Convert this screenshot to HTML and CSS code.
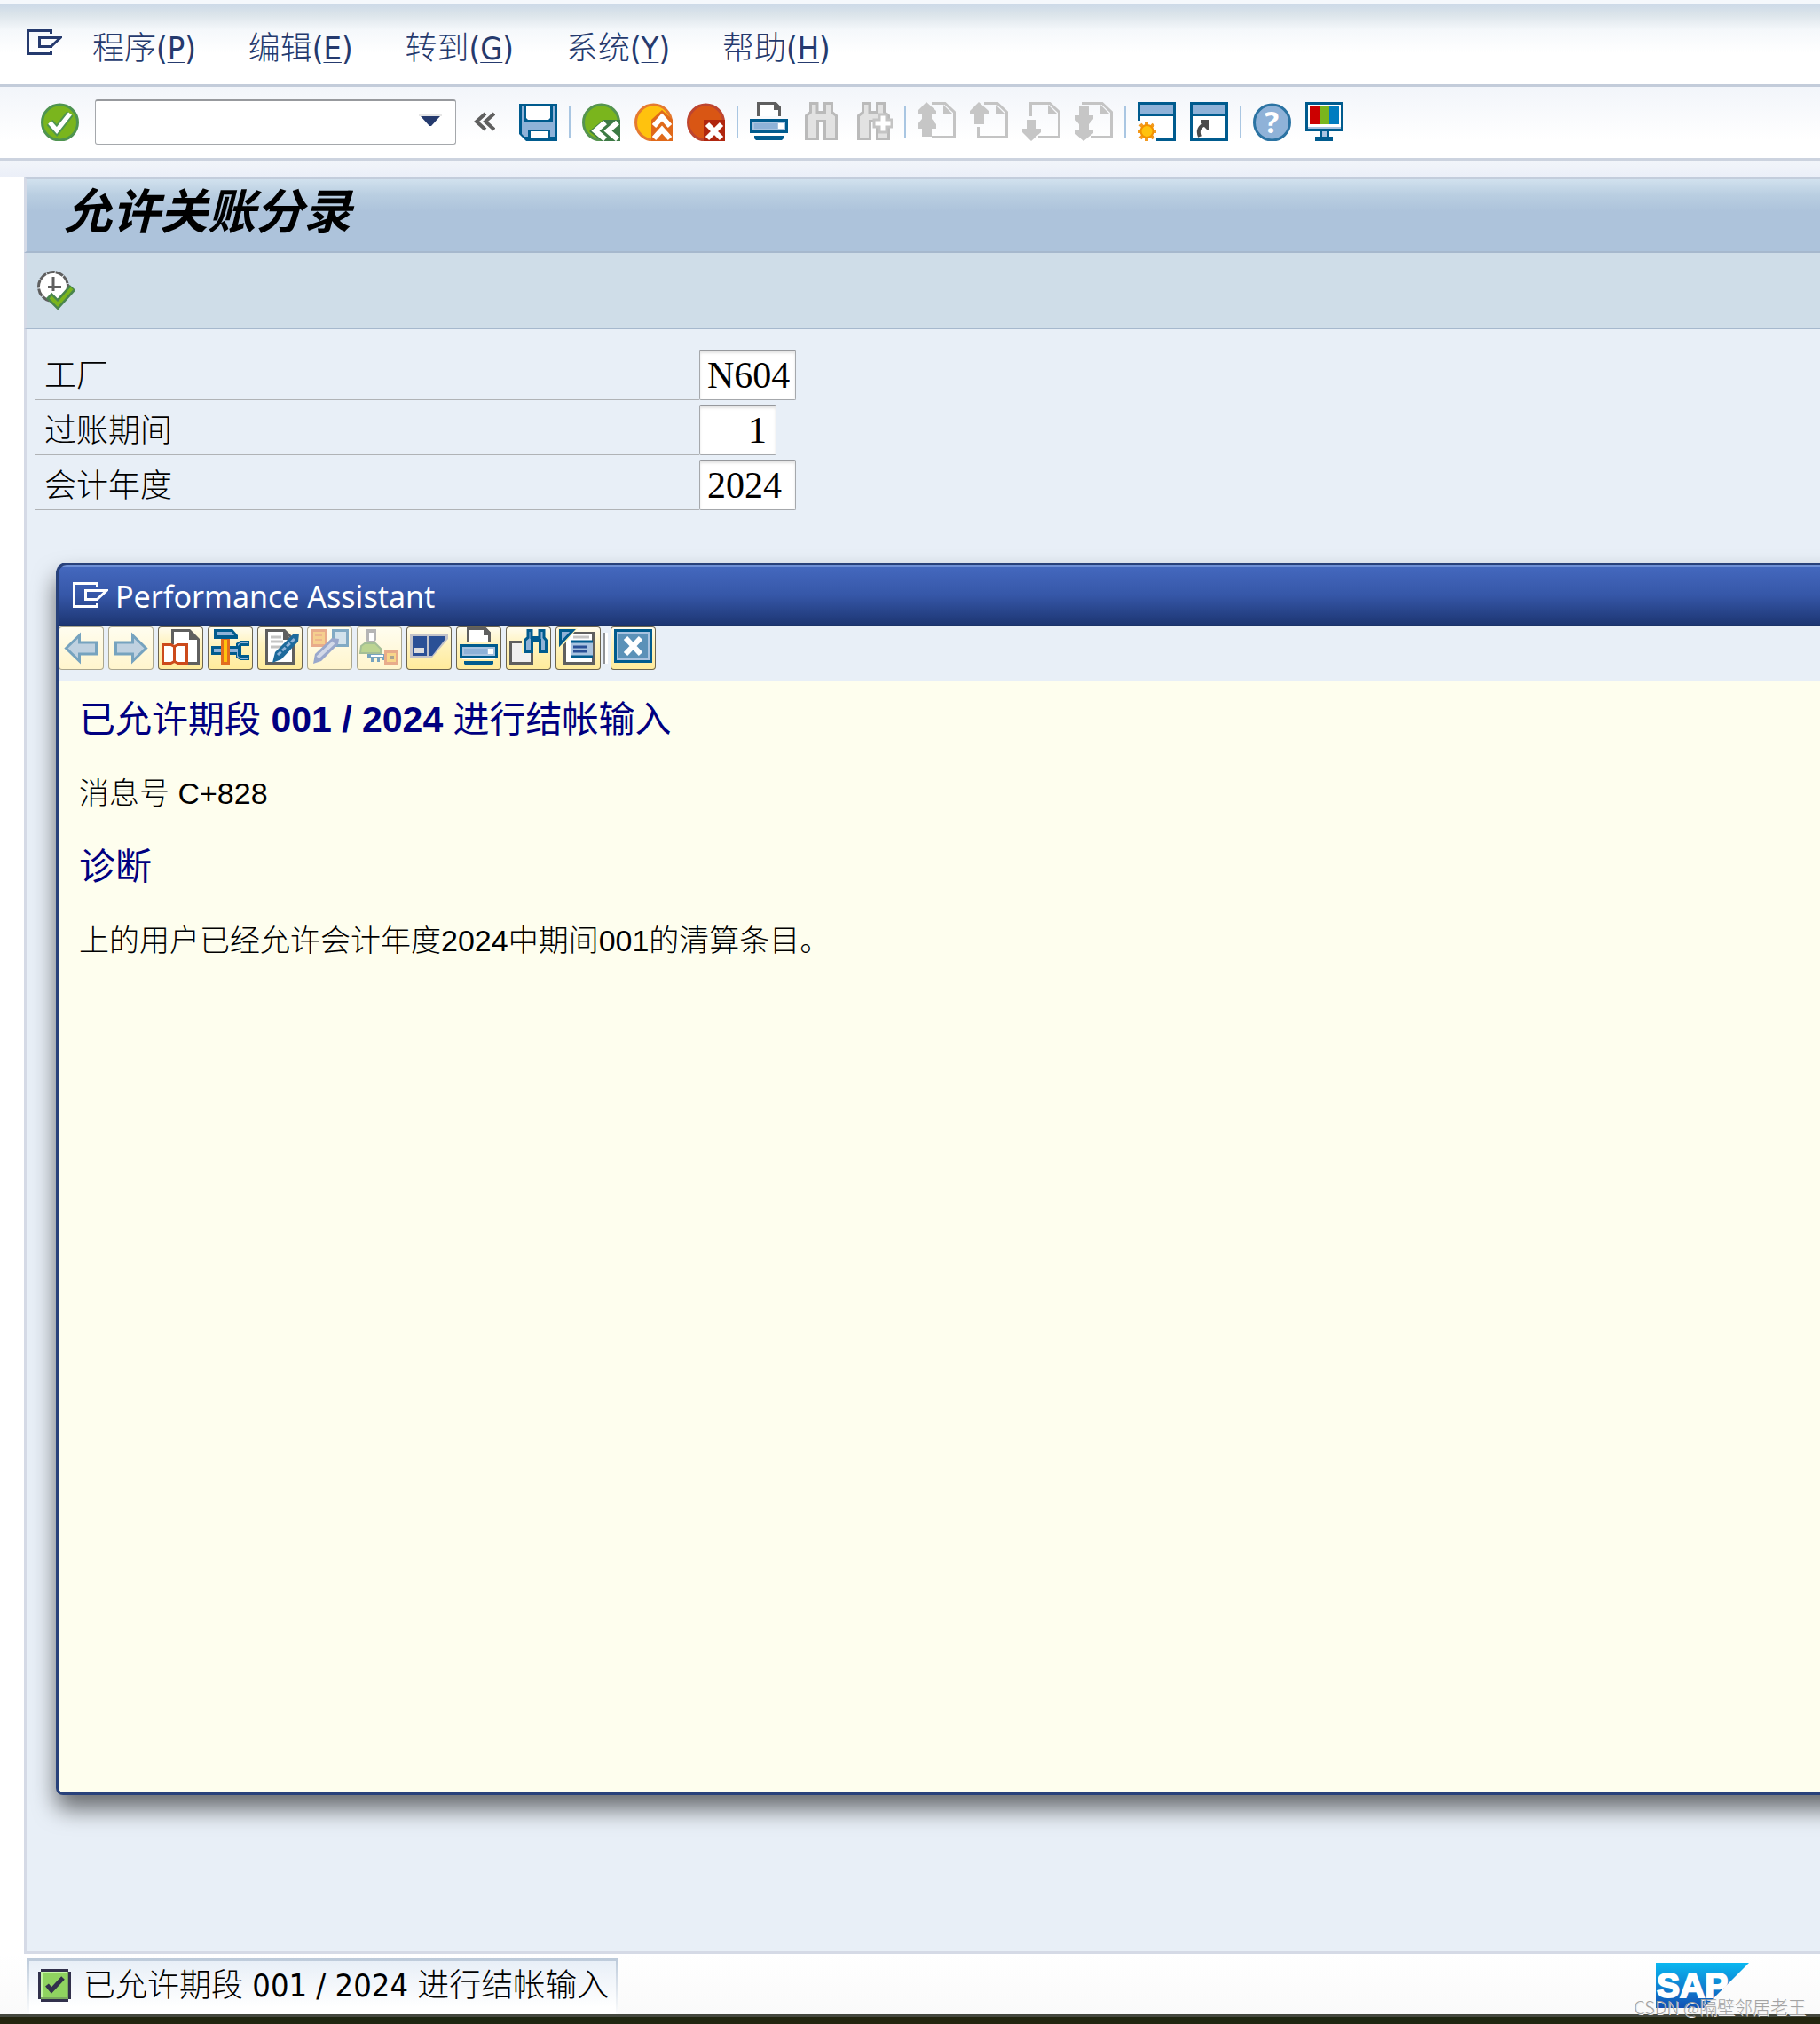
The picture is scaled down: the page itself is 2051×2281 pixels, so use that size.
FILE: index.html
```
<!DOCTYPE html>
<html lang="zh-CN">
<head>
    <meta charset="UTF-8">
    <title>允许关账分录</title>
    <link rel="stylesheet" href="styles.css">
</head>
<body>
    <!-- shared symbols -->
    <svg class="defs" width="0" height="0" aria-hidden="true">
        <symbol id="i-window" viewBox="0 0 40 29">
            <path d="M27.500 5V1.500H1.500v26h26V24M29 19.500H14.500v-10H38L28 19" fill="none" stroke="currentColor" stroke-width="3"/>
        </symbol>
        <symbol id="i-printer" viewBox="0 0 43 44">
            <path d="M9.500 16V1.500H29L33.500 6V16" fill="#fff" stroke="#5f5f5f" stroke-width="3"/>
            <path d="M27 1h3l5 5v3h-8z" fill="#5f5f5f"/>
            <path d="M0 19h43v16H0z" fill="#005b8e"/>
            <path d="M3 22h37v10H3z" fill="#a9c3e0"/>
            <path d="M5 24h26v6H5z" fill="#8fb2d8"/>
            <path d="M32 24h6v6h-6zM3 35h37v1H3z" fill="#fff"/>
            <path d="M5 38h33v3l-2 2H7l-2-2z" fill="#005b8e"/>
        </symbol>
        <symbol id="i-page" viewBox="0 0 43 44">
            <path d="M29 3l10 10H29z" fill="#c4c4c4"/>
        </symbol>
    </svg>

    <nav class="menubar">
        <svg class="window-icon"><use href="#i-window"/></svg>
        <a href="#">程序(<u>P</u>)</a>
        <a href="#">编辑(<u>E</u>)</a>
        <a href="#">转到(<u>G</u>)</a>
        <a href="#">系统(<u>Y</u>)</a>
        <a href="#">帮助(<u>H</u>)</a>
    </nav>

    <div class="toolbar">
        <button type="button" aria-label="回车">
            <svg viewBox="0 0 43 44"><circle cx="21.500" cy="23" r="20" fill="#7ab51d" stroke="#4f9450" stroke-width="3"/><path d="M10 23l8 9L33 13" fill="none" stroke="#4f9450" stroke-width="9"/><path d="M10 23l8 9L33 13" fill="none" stroke="#fff" stroke-width="5"/></svg>
        </button>
        <div class="command">
            <input type="text" aria-label="命令">
            <svg viewBox="0 0 26 16"><path d="M0 0h26v3H0z" fill="#e6e6e6"/><path d="M2 3h22L14 14h-2z" fill="#253a6e"/></svg>
        </div>
        <button type="button" class="collapse" aria-label="收起">
            <svg viewBox="0 0 24 20"><path d="M13 1L3 10l10 9M23 1L13 10l10 9" fill="none" stroke="#5f5f5f" stroke-width="4"/></svg>
        </button>
        <button type="button" aria-label="保存">
            <svg viewBox="0 0 43 44"><path d="M0 2h43v42H8l-8-8z" fill="#005b8e"/><path d="M3 4h2v18h33V4h2v35h-5v-8H10v8H6l-3-3z" fill="#8fb2d8"/><path d="M8 4h27v14l-2 2H10l-2-2zM13 33h19v8H13z" fill="#fff"/></svg>
        </button>
        <span class="sep"></span>
        <div class="group">
            <button type="button" aria-label="返回">
                <svg viewBox="0 0 43 44"><circle cx="21.500" cy="23" r="20" fill="#7ab51d" stroke="#559450" stroke-width="3"/><path d="M24 20h19v24H22L8 33z" fill="#3d7a45"/><path d="M26 23L15 32.500 26 42M40 23L29 32.500 40 42" fill="none" stroke="#fff" stroke-width="6"/></svg>
            </button>
            <button type="button" aria-label="退出">
                <svg viewBox="0 0 43 44"><circle cx="21.500" cy="23" r="20" fill="#ffc20e" stroke="#e57a30" stroke-width="3"/><path d="M31 9l12 11v24H19V20z" fill="#e0691a"/><path d="M22 27l9-10 9 10M22 41l9-10 9 10" fill="none" stroke="#fff" stroke-width="6"/></svg>
            </button>
            <button type="button" aria-label="取消">
                <svg viewBox="0 0 43 44"><circle cx="21.500" cy="23" r="20" fill="#d95614" stroke="#bd4530" stroke-width="3"/><path d="M19 20h24v24H19z" fill="#b0260f"/><path d="M23 25l16 16M39 25L23 41" stroke="#fff" stroke-width="6"/></svg>
            </button>
        </div>
        <span class="sep"></span>
        <div class="group">
            <button type="button" aria-label="打印">
                <svg><use href="#i-printer"/></svg>
            </button>
            <button type="button" aria-label="查找" disabled>
                <svg viewBox="0 0 43 44"><path d="M9.500 1.500H17v10h8.500v-10h8v10l5 4v26h-13v-20h-8v20h-13v-26l5-4z" fill="#e2e2e2" stroke="#bababa" stroke-width="3"/></svg>
            </button>
            <button type="button" aria-label="查找下一个" disabled>
                <svg viewBox="0 0 43 44"><path d="M9.500 1.500H17v10h8.500v-10h8v10l5 4v26h-13v-20h-8v20h-13v-26l5-4z" fill="#e2e2e2" stroke="#bababa" stroke-width="3"/><path d="M28 14h8v6h6v8h-6v6h-8v-6h-6v-8h6z" fill="#fff" stroke="#c4c4c4" stroke-width="3"/></svg>
            </button>
        </div>
        <span class="sep"></span>
        <div class="group">
            <button type="button" aria-label="第一页" disabled>
                <svg viewBox="0 0 43 44"><path d="M16 1.500h15l10.500 10v28H16" fill="none" stroke="#c4c4c4" stroke-width="3"/><use href="#i-page"/><path d="M10 0l11 10v4h-5v5l5 6v5h-5v9H5v-9H0v-5l5-6v-5H0v-4z" fill="#c6c6c6"/></svg>
            </button>
            <button type="button" aria-label="上一页" disabled>
                <svg viewBox="0 0 43 44"><path d="M16 1.500h15l10.500 10v28h-32V28" fill="none" stroke="#c4c4c4" stroke-width="3"/><use href="#i-page"/><path d="M10 0l11 10v4h-5v11H5V14H0v-4z" fill="#c6c6c6"/></svg>
            </button>
            <button type="button" aria-label="下一页" disabled>
                <svg viewBox="0 0 43 44"><path d="M9.500 16V1.500H31l10.500 10v28H18" fill="none" stroke="#c4c4c4" stroke-width="3"/><use href="#i-page"/><path d="M10 44L0 34v-4h5V20h11v10h5v4z" fill="#c6c6c6"/></svg>
            </button>
            <button type="button" aria-label="最后一页" disabled>
                <svg viewBox="0 0 43 44"><path d="M8 1.500h23l10.500 10v28H18" fill="none" stroke="#c4c4c4" stroke-width="3"/><use href="#i-page"/><path d="M10 44L0 35v-4h5v-6l-5-6v-4h5V4h11v11h5v4l-5 6v6h5v4z" fill="#c6c6c6"/></svg>
            </button>
        </div>
        <span class="sep"></span>
        <div class="group">
            <button type="button" aria-label="新建会话">
                <svg viewBox="0 0 43 44"><path d="M0 0h43v44H21v-3h19V16H3v5H0z" fill="#005b8e"/><path d="M3 3h37v10H3z" fill="#8fb2d8"/><path d="M3 16h37v25H21L3 21z" fill="#fff"/><path d="M10 22v22M-1 33h22M3 25l15 16M18 25L3 41" stroke="#f39a1f" stroke-width="4"/><circle cx="10.500" cy="33" r="7" fill="#ffc20e" stroke="#f39200" stroke-width="2"/></svg>
            </button>
            <button type="button" aria-label="创建快捷方式">
                <svg viewBox="0 0 43 44"><path d="M0 0h43v44H0z" fill="#005b8e"/><path d="M3 3h37v10H3z" fill="#8fb2d8"/><path d="M3 16h37v25H3z" fill="#fff"/><path d="M11 39c-3-7 0-12 6-14" fill="none" stroke="#4a4a4a" stroke-width="4"/><path d="M12 20h10v11h-3l-7-7z" fill="#4a4a4a"/></svg>
            </button>
        </div>
        <span class="sep"></span>
        <div class="group">
            <button type="button" aria-label="帮助">
                <svg viewBox="0 0 43 44"><circle cx="21.500" cy="23" r="20" fill="#8fb2d8" stroke="#2b73a3" stroke-width="3"/><text x="21" y="35" class="question">?</text></svg>
            </button>
            <button type="button" aria-label="定制本地布局">
                <svg viewBox="0 0 43 44"><path d="M0 0h43v33H27v6h4v5H11v-5h5v-6H0z" fill="#005b8e"/><path d="M3 3h37v25H3z" fill="#fff"/><path d="M3 28h37v2H3zM19 33h5v6h-5z" fill="#a9c3e0"/><path d="M5 5h11v20H5z" fill="#c00"/><path d="M16 5h11v20H16z" fill="#7ab51d"/><path d="M27 5h11v20H27z" fill="#007cc0"/></svg>
            </button>
        </div>
    </div>

    <main class="screen">
        <header class="screen-title"><h1>允许关账分录</h1></header>
        <div class="app-toolbar">
            <button type="button" aria-label="执行">
                <svg viewBox="0 0 43 44"><circle cx="18" cy="18" r="16.500" fill="#fff" stroke="#5f5f5f" stroke-width="3" stroke-dasharray="9 1"/><path d="M18 7v16M12 18.500h15" stroke="#5f5f5f" stroke-width="3"/><path d="M13 28l10 10L40 19" fill="none" stroke="#4a854e" stroke-width="9"/><path d="M15 30l8 8L39 20" fill="none" stroke="#7ab51d" stroke-width="4"/></svg>
            </button>
        </div>

        <form class="selection">
            <div class="field">
                <label for="plant">工厂</label>
                <input type="text" id="plant" value="N604">
            </div>
            <div class="field">
                <label for="period">过账期间</label>
                <input type="text" id="period" class="short" value="1">
            </div>
            <div class="field">
                <label for="year">会计年度</label>
                <input type="text" id="year" value="2024">
            </div>
        </form>

        <section class="assistant">
            <div class="assistant-title">
                <svg class="window-icon"><use href="#i-window"/></svg>
                <h2>Performance Assistant</h2>
            </div>
            <div class="assistant-toolbar">
                <button type="button" aria-label="后退" disabled>
                    <svg viewBox="0 0 51 49"><path d="M8.500 24.500L23.500 10v8h19v13h-19v8z" fill="#bfd1e0" stroke="#76a3bf" stroke-width="3"/></svg>
                </button>
                <button type="button" aria-label="前进" disabled>
                    <svg viewBox="0 0 51 49"><path d="M42.500 24.500L27.500 10v8h-19v13h19v8z" fill="#bfd1e0" stroke="#76a3bf" stroke-width="3"/></svg>
                </button>
                <button type="button" aria-label="应用帮助">
                    <svg viewBox="0 0 51 49"><path d="M16.500 20V4.500h19l10 10v27h-13" fill="#fff" stroke="#5f5f5f" stroke-width="3"/><path d="M35 3l12 12H35z" fill="#5f5f5f"/><path d="M5.500 20.500h9l4 2 4-2h10v21h-10l-4-2-4 2h-9zM18.500 22v19" fill="#fff" stroke="#cc4a1b" stroke-width="3"/></svg>
                </button>
                <button type="button" aria-label="技术信息">
                    <svg viewBox="0 0 51 49"><path d="M4 22h28v-3l5-3h10v6h-9v10h9v6H37l-5-3v-3H4z" fill="#005b8e"/><path d="M7 25h27v-5l3-2h8v1h-8l-3 3v11l3 3h8v1h-8l-4-3v-5H7z" fill="#8fb2d8"/><path d="M16.500 13.500h7v28h-7z" fill="#ffc20e" stroke="#e36c1e" stroke-width="3"/><path d="M7 3h21l6 7v4H7z" fill="#005b8e"/><path d="M10 6h17l3 4H10z" fill="#8fb2d8"/></svg>
                </button>
                <button type="button" aria-label="编辑文档">
                    <svg viewBox="0 0 51 49"><path d="M10.500 4.500h20l10 10v27h-30z" fill="#fff" stroke="#5f5f5f" stroke-width="3"/><path d="M29 3l9 12h-9z" fill="#5f5f5f"/><path d="M15 12h12M15 17h14M15 23h12" stroke="#c4c4c4" stroke-width="3"/><path d="M17 41l3-12L40 9l7-1-1 9-19 20z" fill="#1d6a9c"/><path d="M23 32L43 13" stroke="#8fb2d8" stroke-width="3" stroke-dasharray="5 2"/></svg>
                </button>
                <button type="button" aria-label="链接编辑" disabled>
                    <svg viewBox="0 0 51 49"><path d="M5.500 4.500h16v17h-16z" fill="#f5cf8e" stroke="#e8ab8a" stroke-width="3"/><path d="M9 10h8M9 15h8" stroke="#eeb58c" stroke-width="2"/><path d="M29.500 4.500h16v17h-16z" fill="#d3e2ec" stroke="#82aac4" stroke-width="3"/><path d="M7 42l2-11 19-18 8 1-1 6-19 19z" fill="#9aa8cc"/><path d="M12 35l18-17" stroke="#d3d9e8" stroke-width="4"/></svg>
                </button>
                <button type="button" aria-label="权限" disabled>
                    <svg viewBox="0 0 51 49"><path d="M10 3h12v12l-3 4h-6l-3-4z" fill="#b5b5b5"/><path d="M14 7h5v9h-5z" fill="#fff"/><path d="M5 22l4-3h12l6 6v5H4z" fill="#bcd492" stroke="#a5bf97" stroke-width="2"/><path d="M12 31h20v7h-3v-2h-3v4h-3v-4h-4v4h-3v-5h-4z" fill="#76a3bf"/><path d="M16 32h14v2H16z" fill="#fff"/><path d="M32.500 28.500h13v13h-13z" fill="#f8d68a" stroke="#e8ab8a" stroke-width="3"/><path d="M38 33h4v4h-4z" fill="#a8a390"/></svg>
                </button>
                <button type="button" aria-label="个性化">
                    <svg viewBox="0 0 51 49"><path d="M4 8h43v6L29 35H4z" fill="#c3c3c9"/><path d="M7 11h16v22H7zM25 11h19v3L29 33h-4z" fill="#2b5096"/><path d="M9 24h11v6H9z" fill="#ddd"/></svg>
                </button>
                <button type="button" aria-label="打印">
                    <svg viewBox="0 0 51 49"><use href="#i-printer" x="4" y="1" width="43" height="44"/></svg>
                </button>
                <button type="button" aria-label="查找">
                    <svg viewBox="0 0 51 49"><path d="M5.500 17.500h24v24h-24z" fill="#f0f0f0" stroke="#5f5f5f" stroke-width="3"/><path d="M18 14h14v16H18z" fill="#fff3c0"/><path d="M25 4.500h4v8h9v-8h5v8l2.500 3v13h-7v-13h-9v13h-8v-13l3.500-3z" fill="#8fb2d8" stroke="#005b8e" stroke-width="3"/></svg>
                </button>
                <button type="button" aria-label="浮动显示">
                    <svg viewBox="0 0 51 49"><path d="M10.500 7.500h32v34h-32z" fill="#fff" stroke="#5f5f5f" stroke-width="3"/><path d="M20 12h18" stroke="#c4c4c4" stroke-width="3"/><path d="M18 17.500h24v16H18z" fill="#a9c3e0"/><path d="M17 17h25M17 34h25" stroke="#005b8e" stroke-width="3"/><path d="M20 23h16M20 28h16" stroke="#2b5096" stroke-width="3"/><path d="M3 2h22L6 24H3z" fill="#fff3b8"/><path d="M5.500 4.500h14l-14 15z" fill="#8fb2d8" stroke="#005b8e" stroke-width="3"/></svg>
                </button>
                <span class="divider"></span>
                <button type="button" aria-label="关闭">
                    <svg viewBox="0 0 51 49"><path d="M4 3h43v38H4z" fill="#005b8e"/><path d="M7 6h37v32H7z" fill="#a9c3e0"/><path d="M9 8h33v27H9z" fill="#5b91b8"/><path d="M17 13l17 18M34 13L17 31" stroke="#fff" stroke-width="6"/></svg>
                </button>
            </div>
            <article class="document">
                <h3>已允许期段 <b>001 / 2024</b> 进行结帐输入</h3>
                <p>消息号 C+828</p>
                <h3>诊断</h3>
                <p>上的用户已经允许会计年度2024中期间001的清算条目。</p>
            </article>
        </section>
    </main>

    <footer class="statusbar">
        <div class="message">
            <svg viewBox="0 0 37 37"><path d="M3 0h31v3h3v31h-3v3H3v-3H0V3h3z" fill="#32314c"/><path d="M3 3h31v31H3z" fill="#78a85c"/><path d="M3 3h29v29H3z" fill="#8fd360"/><path d="M4 32V4h28" fill="none" stroke="#c5f5a5" stroke-width="2"/><path d="M10 18l5 6L28 10" fill="none" stroke="#32314c" stroke-width="5"/></svg>
            <span>已允许期段 001 / 2024 进行结帐输入</span>
        </div>
        <svg class="logo" viewBox="0 0 105 51">
            <defs><linearGradient id="sap" x2="0" y2="1"><stop offset="0" stop-color="#0ab8f1"/><stop offset="1" stop-color="#1450b4"/></linearGradient></defs>
            <path d="M0 0h105L54 51H0z" fill="url(#sap)"/>
            <text x="1" y="39">SAP</text>
        </svg>
        <span class="watermark">CSDN @隔壁邻居老王</span>
    </footer>
    <div class="desktop"></div>
</body>
</html>
```
FILE: styles.css
```
* {
    box-sizing: border-box;
}
body {
    display: flex;
    flex-direction: column;
    min-height: 100vh;
    margin: 0;
    overflow-x: hidden;
    background-color: #fff;
    color: #000;
    font-family: "DejaVu Sans Condensed", "Noto Sans CJK SC", sans-serif;
    font-size: 36px;
    font-weight: 300;
    line-height: 48px;
}
h1, h2, h3, p {
    margin: 0;
    font-weight: 300;
}
button {
    padding: 0;
    border: none;
    background: none;
}
button svg {
    display: block;
}
.defs {
    position: absolute;
}

/* menu bar */
.menubar {
    display: flex;
    align-items: center;
    gap: 59px;
    height: 98px;
    padding: 14px 30px 0;
    border-bottom: 3px solid #c3ccda;
    background: linear-gradient(#f5f8fc 4px, #ccd9e8 4px, #dbe4ea 16px, #f5f8fb 34px, #fff 60px);
    color: #253a6e;
}
.menubar a {
    color: inherit;
    text-decoration: none;
}
.menubar u {
    text-decoration-thickness: 1px;
    text-underline-offset: 3px;
}
.window-icon {
    flex: none;
    width: 40px;
    height: 29px;
}
.menubar .window-icon {
    margin: 0 -25px 14px 0;
}

/* system toolbar */
.toolbar {
    display: flex;
    align-items: center;
    height: 83px;
    padding: 0 46px 2px;
    border-bottom: 3px solid #ccd3df;
    background: linear-gradient(#f2f5fa, #fff 60px);
}
.toolbar button, .toolbar button svg {
    width: 43px;
    height: 44px;
}
.toolbar .collapse {
    width: 24px;
    margin: 0 27px 0 20px;
}
.toolbar .collapse svg {
    width: 24px;
}
.command {
    position: relative;
    margin-left: 18px;
}
.command input {
    display: block;
    width: 407px;
    height: 51px;
    padding: 0 48px 0 8px;
    border: 1px solid #a5a8ac;
    border-top: 2px solid #97999d;
    border-radius: 3px;
    background-color: #fff;
    font: inherit;
}
.command svg {
    position: absolute;
    top: 16px;
    right: 16px;
    width: 26px;
    height: 16px;
}
.group {
    display: flex;
    gap: 16px;
}
.sep {
    width: 2px;
    height: 37px;
    margin: 0 13px;
    background-color: #a9c6e2;
}
.question {
    fill: #fff;
    font-family: "Open Sans", sans-serif;
    font-size: 34px;
    font-weight: bold;
    text-anchor: middle;
}

/* screen area */
.screen {
    display: flex;
    flex: 1;
    flex-direction: column;
    padding: 18px 0 0 27px;
    background: linear-gradient(#f2f5fa, #ebeff8 18px, #fff 18px);
}
.screen-title {
    height: 86px;
    padding-left: 42px;
    border-top: 3px solid #c3cddc;
    border-bottom: 2px solid #a6b8cd;
    border-left: 3px solid #d5dae6;
    background: linear-gradient(#d1e1ee, #b9cee1 18px, #adc3db 36px);
}
.screen-title h1 {
    font-size: 54px;
    font-style: italic;
    font-weight: bold;
    line-height: 76px;
}
.app-toolbar {
    height: 86px;
    padding: 20px 12px;
    border-bottom: 1px solid #a6b8cd;
    border-left: 3px solid #d5dae6;
    background-color: #cfdde8;
}
.app-toolbar button, .app-toolbar svg {
    width: 43px;
    height: 44px;
}
.selection {
    display: grid;
    gap: 5px;
    padding: 23px 10px 59px;
    border-left: 3px solid #d5dae6;
    background-color: #e8eff7;
}
.field {
    display: flex;
}
.field label {
    width: 748px;
    height: 57px;
    padding: 6px 10px 0;
    border-bottom: 1px solid #b0b3b6;
}
.field input {
    width: 109px;
    height: 57px;
    padding: 0 6px 0 8px;
    border: 1px solid #a5a8ac;
    border-top: 2px solid #97999d;
    border-radius: 2px;
    background-color: #fff;
    box-shadow: inset 0 2px 3px #e4e4e4;
    font-family: "Liberation Serif", serif;
    font-size: 42px;
}
.field .short {
    width: 87px;
    padding-right: 10px;
    text-align: right;
}

/* performance assistant window */
.assistant {
    display: flex;
    flex: 1;
    flex-direction: column;
    position: relative;
    padding: 0 0 176px 33px;
    border-bottom: 3px solid #d5dae6;
    border-left: 3px solid #d5dae6;
    background-color: #e8eff7;
}
.assistant::before {
    content: "";
    position: absolute;
    top: 0;
    right: -40px;
    bottom: 176px;
    left: 33px;
    border-radius: 12px;
    box-shadow: 0 16px 26px rgba(0, 0, 0, 0.55);
}
.assistant > * {
    position: relative;
    border-left: 3px solid #28417a;
}
.assistant-title {
    display: flex;
    align-items: center;
    gap: 8px;
    height: 72px;
    padding: 0 16px;
    border-top: 3px solid #28417a;
    border-bottom: 2px solid #1b3368;
    border-top-left-radius: 12px;
    background: linear-gradient(#6f90d5 2px, #4468be 2px, #3657a8 50%, #1d3673);
    color: #fff;
}
.assistant-title h2 {
    padding-top: 2px;
    font-family: "Noto Sans", sans-serif;
    font-size: 34px;
    font-weight: 400;
}
.assistant-toolbar {
    display: flex;
    gap: 5px;
    height: 62px;
    background-color: #e8eff7;
}
.assistant-toolbar button {
    width: 51px;
    height: 49px;
    border-radius: 4px;
    background: linear-gradient(#fffdf0, #fff3c0 40%, #ffeb9a);
    box-shadow: inset 0 0 0 1px #6b6450;
}
.assistant-toolbar button:disabled {
    background: linear-gradient(#fffdf0, #fff5cc);
    box-shadow: inset 0 0 0 1px #aaa68f;
}
.assistant-toolbar svg {
    width: 51px;
    height: 49px;
}
.divider {
    width: 5px;
    height: 35px;
    margin: 7px -2px 0 -2px;
    border-left: 2px solid #8f9296;
    background-color: #fff;
}
.document {
    flex: 1;
    padding: 19px 23px;
    border-bottom: 3px solid #28417a;
    border-bottom-left-radius: 8px;
    background-color: #fefeee;
    font-family: "Liberation Sans", "Noto Sans CJK SC", sans-serif;
    font-size: 34px;
}
.document h3, .document p {
    margin-bottom: 35px;
}
.document h3 {
    color: #000080;
    font-size: 41px;
    font-weight: 400;
}

/* status bar */
.statusbar {
    display: flex;
    position: relative;
    justify-content: space-between;
    height: 68px;
    padding: 5px 80px 0 30px;
    background: linear-gradient(#fff, #fafafa);
}
.message {
    display: flex;
    align-items: center;
    gap: 14px;
    padding: 0 8px 5px 10px;
    border: 3px solid;
    border-bottom: none;
    border-image: linear-gradient(#bccada, #fff) 3;
    background: linear-gradient(#e8eff7, #fff 52px);
}
.message svg {
    width: 37px;
    height: 37px;
}
.logo {
    width: 105px;
    height: 51px;
    margin-top: 5px;
}
.logo text {
    fill: #fff;
    stroke: #fff;
    stroke-width: 2px;
    font-family: "Liberation Sans", sans-serif;
    font-size: 39px;
    font-weight: bold;
}
.watermark {
    position: absolute;
    right: 16px;
    bottom: -6px;
    color: #a3a3a3;
    font-family: "Noto Sans CJK SC", sans-serif;
    font-size: 20px;
    line-height: 28px;
    text-shadow: 1px 1px 0 #eee;
    z-index: 1;
}
.desktop {
    height: 11px;
    border-top: 3px solid #45483f;
    background: linear-gradient(90deg, #24250f, #1e2712, #24250f, #1e2712, #24250f);
}
```
